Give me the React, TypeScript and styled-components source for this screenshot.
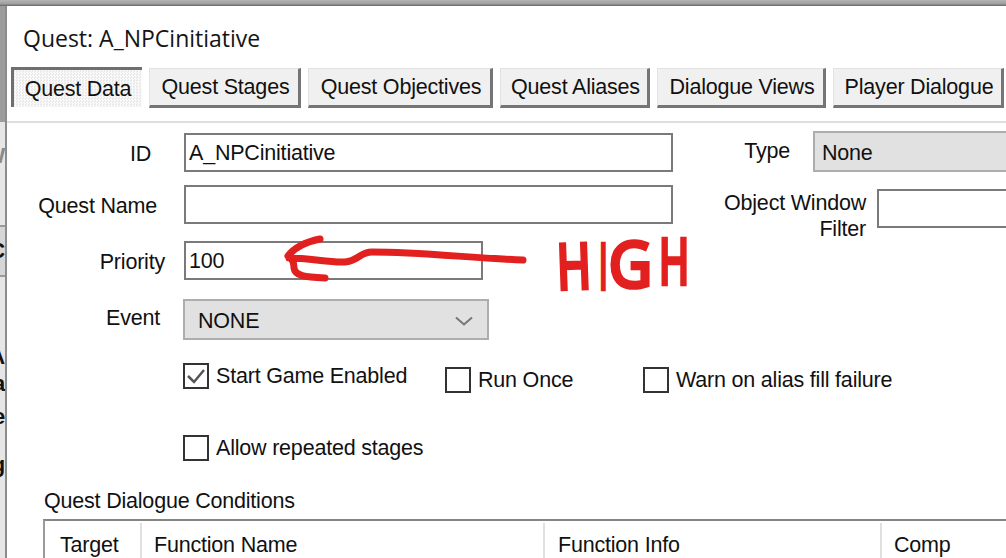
import React from 'react';
import styled, { createGlobalStyle } from 'styled-components';

const GlobalStyle = createGlobalStyle`
  html, body {
    margin: 0;
    padding: 0;
    background: #fff;
  }
  * {
    box-sizing: border-box;
  }
`;

const Page = styled.div`
  position: relative;
  width: 1006px;
  height: 558px;
  overflow: hidden;
  background: #fff;
  color: #111;
  font-family: 'Liberation Sans', Arial, sans-serif;
  font-size: 21.5px;
  letter-spacing: -0.2px;
`;

const TopBand = styled.div`
  height: 6px;
  background: linear-gradient(#b4b4b4, #a0a0a0 60%, #666);
`;

const Body = styled.div`
  display: flex;
  height: 552px;
`;

const Strip = styled.div`
  flex: none;
  width: 7px;
  display: flex;
  flex-direction: column;
  border-right: 2px solid #8c8c8c;
  background: #e6e6e6;
`;

const StripBlock = styled.div<{ $h: number; $bg?: string; $line?: boolean; $color?: string }>`
  flex: none;
  height: ${(p) => p.$h}px;
  display: flex;
  justify-content: flex-end;
  align-items: center;
  overflow: hidden;
  white-space: nowrap;
  background: ${(p) => p.$bg || 'transparent'};
  border-bottom: ${(p) => (p.$line ? '2px solid #9a9a9a' : 'none')};
  color: ${(p) => p.$color || '#111'};
  font-size: 22px;
  font-weight: 700;
`;

const Win = styled.div`
  flex: 1;
  min-width: 0;
  display: flex;
  flex-direction: column;
  background: #fff;
`;

const Title = styled.div`
  flex: none;
  height: 61px;
  padding: 2px 0 0 16px;
  display: flex;
  align-items: center;
  font-family: 'Open Sans', sans-serif;
  font-size: 23px;
  letter-spacing: 0;
  color: #151515;
`;

const TabBar = styled.div`
  flex: none;
  display: flex;
  gap: 7px;
  padding-left: 4px;
  height: 41px;
`;

const Tab = styled.div<{ $w: number; $active?: boolean }>`
  flex: none;
  width: ${(p) => p.$w}px;
  height: 40px;
  display: flex;
  align-items: center;
  justify-content: center;
  white-space: nowrap;
  margin-top: ${(p) => (p.$active ? '0' : '1px')};
  padding: ${(p) => (p.$active ? '2px 0 0 0' : '0 0 0 3px')};
  background: ${(p) =>
    p.$active ? 'repeating-conic-gradient(#fafafa 0 25%, #e9e9e9 0 50%) 0 0 / 3px 3px' : '#f0f0f0'};
  border-style: solid;
  border-width: ${(p) => (p.$active ? '3px 0 0 3px' : '1px 3px 3px 1px')};
  border-color: ${(p) =>
    p.$active ? '#6f6f6f' : '#e2e2e2 #757575 #757575 #e2e2e2'};
`;

const Divider = styled.div`
  flex: none;
  height: 2px;
  margin-top: 13px;
  background: #dedede;
`;

const Form = styled.div`
  flex: none;
  display: flex;
  padding-top: 8px;
`;

const LeftCol = styled.div`
  flex: none;
  width: 666px;
  padding-top: 2px;
  display: flex;
  flex-direction: column;
`;

const Field = styled.div<{ $top?: number }>`
  display: flex;
  align-items: center;
  margin-top: ${(p) => p.$top || 0}px;
`;

const FieldLabel = styled.div<{ $pad: number; $up?: number }>`
  flex: none;
  width: 177px;
  padding-top: 3px;
  padding-right: ${(p) => p.$pad}px;
  padding-bottom: ${(p) => p.$up || 0}px;
  text-align: right;
  white-space: nowrap;
`;

const TextBox = styled.div<{ $w: number }>`
  flex: none;
  width: ${(p) => p.$w}px;
  height: 39px;
  padding: 2px 0 0 3px;
  display: flex;
  align-items: center;
  border: 2px solid #7a7a7a;
  background: #fff;
  white-space: nowrap;
`;

const Combo = styled.div<{ $w: number; $pad: number; $pull?: number }>`
  flex: none;
  width: ${(p) => p.$w}px;
  height: 41px;
  margin-left: ${(p) => -(p.$pull || 0)}px;
  padding: 3px 14px 0 ${(p) => p.$pad}px;
  display: flex;
  align-items: center;
  justify-content: space-between;
  border: 2px solid #adadad;
  background: #e1e1e1;
`;

const Chevron = styled.svg`
  width: 18px;
  height: 10px;
  display: block;
`;

const ChecksRow = styled.div<{ $top: number }>`
  display: flex;
  align-items: flex-start;
  padding-left: 176px;
  margin-top: ${(p) => p.$top}px;
  width: 1000px;
`;

const CheckItem = styled.div<{ $w?: number; $drop?: number }>`
  flex: none;
  width: ${(p) => (p.$w ? `${p.$w}px` : 'auto')};
  margin-top: ${(p) => p.$drop || 0}px;
  display: flex;
  align-items: center;
  gap: 7px;
  white-space: nowrap;
`;

const Box = styled.div`
  flex: none;
  width: 26px;
  height: 26px;
  border: 2px solid #333;
  background: #fff;
`;

const GroupCaption = styled.div`
  margin: 27px 0 0 37px;
  height: 26px;
  line-height: 26px;
  white-space: nowrap;
`;

const Table = styled.div`
  margin: 5px 0 0 36px;
  width: 1000px;
  height: 40px;
  display: flex;
  padding-top: 2px;
  border-top: 2px solid #858585;
  border-left: 2px solid #9a9a9a;
`;

const HeadCell = styled.div<{ $w: number; $pad: number }>`
  flex: none;
  width: ${(p) => p.$w}px;
  padding-left: ${(p) => p.$pad}px;
  padding-top: 10px;
  border-right: 2px solid #e0e0e0;
  white-space: nowrap;
`;

const RightCol = styled.div`
  flex: none;
  width: 333px;
  display: flex;
  flex-direction: column;
`;

const TypeRow = styled.div`
  display: flex;
  align-items: center;
`;

const TypeLabel = styled.div`
  flex: none;
  width: 117px;
  margin-right: 23px;
  padding-bottom: 1px;
  text-align: right;
`;

const FilterRow = styled.div`
  display: flex;
  align-items: flex-start;
  gap: 11px;
  margin-top: 17px;
`;

const FilterLabel = styled.div`
  flex: none;
  width: 193px;
  margin-top: 1px;
  text-align: right;
  line-height: 26px;
`;

const Overlay = styled.svg`
  position: absolute;
  left: 0;
  top: 0;
  pointer-events: none;
`;

const Scrawl = styled.div`
  position: absolute;
  left: 557px;
  top: 229px;
  display: flex;
  font-family: 'Open Sans', sans-serif;
  font-size: 62px;
  line-height: 72px;
  letter-spacing: 0;
  color: #e2201f;
  -webkit-text-stroke: 4.5px #e2201f;
`;

const ScrawlLetter = styled.span<{ $w: number; $sx: number; $lift?: number; $tilt?: number }>`
  display: block;
  width: ${(p) => p.$w}px;
  transform-origin: left center;
  transform: translateY(${(p) => -(p.$lift || 0)}px) rotate(${(p) => p.$tilt || 0}deg)
    scaleX(${(p) => p.$sx});
`;

const tabs = [
  { label: 'Quest Data', w: 131, active: true },
  { label: 'Quest Stages', w: 152 },
  { label: 'Quest Objectives', w: 185 },
  { label: 'Quest Aliases', w: 150 },
  { label: 'Dialogue Views', w: 169 },
  { label: 'Player Dialogue', w: 171 },
];

const columns = [
  { label: 'Target', w: 97, pad: 15 },
  { label: 'Function Name', w: 403, pad: 12 },
  { label: 'Function Info', w: 337, pad: 13 },
  { label: 'Comp', w: 160, pad: 12 },
];

const App: React.FC = () => {
  return (
    <Page>
      <GlobalStyle />
      <TopBand />
      <Body>
        <Strip>
          <StripBlock $h={116} $bg="#9c9c9c" />
          <StripBlock $h={67} $color="#8a8a8a">W</StripBlock>
          <StripBlock $h={38} $line />
          <StripBlock $h={50} $bg="#d6d6d6" $line>C</StripBlock>
          <StripBlock $h={67} />
          <StripBlock $h={25}>A</StripBlock>
          <StripBlock $h={30}>a</StripBlock>
          <StripBlock $h={36}>e</StripBlock>
          <StripBlock $h={60}>g</StripBlock>
        </Strip>
        <Win>
          <Title>Quest: A_NPCinitiative</Title>
          <TabBar>
            {tabs.map((t) => (
              <Tab key={t.label} $w={t.w} $active={t.active}>
                {t.label}
              </Tab>
            ))}
          </TabBar>
          <Divider />
          <Form>
            <LeftCol>
              <Field>
                <FieldLabel $pad={33}>ID</FieldLabel>
                <TextBox $w={489}>A_NPCinitiative</TextBox>
              </Field>
              <Field $top={13}>
                <FieldLabel $pad={27}>Quest Name</FieldLabel>
                <TextBox $w={489} />
              </Field>
              <Field $top={17}>
                <FieldLabel $pad={19}>Priority</FieldLabel>
                <TextBox $w={299}>100</TextBox>
              </Field>
              <Field $top={19}>
                <FieldLabel $pad={24} $up={5}>Event</FieldLabel>
                <Combo $w={306} $pad={13} $pull={1}>
                  NONE
                  <Chevron viewBox="0 0 18 10">
                    <path d="M1 1.5 L9 8.5 L17 1.5" fill="none" stroke="#777" strokeWidth="2" />
                  </Chevron>
                </Combo>
              </Field>
              <ChecksRow $top={23}>
                <CheckItem $w={262}>
                  <Box>
                    <svg width="22" height="22" viewBox="0 0 22 22">
                      <path d="M3 11 L9 17 L19 5" fill="none" stroke="#555" strokeWidth="2.5" />
                    </svg>
                  </Box>
                  Start Game Enabled
                </CheckItem>
                <CheckItem $w={198} $drop={4}>
                  <Box />
                  Run Once
                </CheckItem>
                <CheckItem $drop={4}>
                  <Box />
                  Warn on alias fill failure
                </CheckItem>
              </ChecksRow>
              <ChecksRow $top={42}>
                <CheckItem>
                  <Box />
                  Allow repeated stages
                </CheckItem>
              </ChecksRow>
              <GroupCaption>Quest Dialogue Conditions</GroupCaption>
              <Table>
                {columns.map((c) => (
                  <HeadCell key={c.label} $w={c.w} $pad={c.pad}>
                    {c.label}
                  </HeadCell>
                ))}
              </Table>
            </LeftCol>
            <RightCol>
              <TypeRow>
                <TypeLabel>Type</TypeLabel>
                <Combo $w={300} $pad={7}>None</Combo>
              </TypeRow>
              <FilterRow>
                <FilterLabel>
                  Object Window
                  <br />
                  Filter
                </FilterLabel>
                <TextBox $w={200} />
              </FilterRow>
            </RightCol>
          </Form>
        </Win>
      </Body>
      <Overlay width="1006" height="558" viewBox="0 0 1006 558">
        <path
          d="M523 260 C470 258 420 252 372 252 C360 252 358 261 345 262 C330 263 310 258 289 258 M320 239 C305 242 295 247 288 256 C292 258 294 262 294 268 C295 276 305 277 325 278"
          fill="none"
          stroke="#e2201f"
          strokeWidth="7"
          strokeLinecap="round"
          strokeLinejoin="round"
        />
      </Overlay>
      <Scrawl>
        <ScrawlLetter $w={42} $sx={0.74} $tilt={-2}>H</ScrawlLetter>
        <ScrawlLetter $w={10} $sx={0.5}>I</ScrawlLetter>
        <ScrawlLetter $w={50} $sx={0.95} $lift={2}>G</ScrawlLetter>
        <ScrawlLetter $w={40} $sx={0.66} $lift={5}>H</ScrawlLetter>
      </Scrawl>
    </Page>
  );
};

export default App;
